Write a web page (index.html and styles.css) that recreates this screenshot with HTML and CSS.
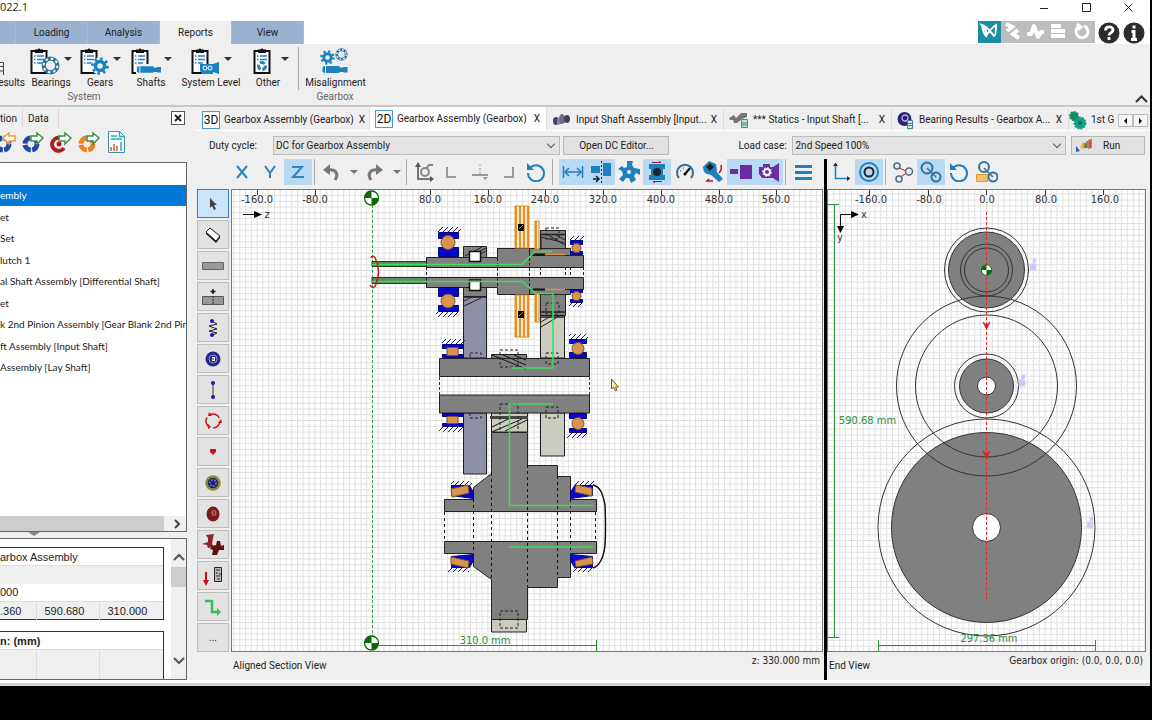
FILE: index.html
```html
<!DOCTYPE html>
<html lang="en">
<head>
    <meta charset="UTF-8">
    <meta name="viewport" content="width=device-width, initial-scale=1.0">
    <title>Gearbox Assembly</title>
    <link rel="stylesheet" href="styles.css">
</head>
<body>
    <!-- shared symbols -->
    <svg class="defs" width="0" height="0">
        <symbol id="clipboard" viewBox="0 0 18 28">
            <path d="M1.5 4h15v22h-15z" fill="#fff" stroke="#111" stroke-width="2"/>
            <path d="M5 2.500h2.500a1.600 1.600 0 0 1 3 0H13V6H5z" fill="#111"/>
            <path d="M4 9h1.500M4 12.500h1.500M4 16h1.500M7 9h7M7 12.500h7M7 16h5" stroke="#2980b9" stroke-width="1.500"/>
        </symbol>
        <symbol id="origin" viewBox="-8 -8 16 16">
            <circle r="7" fill="#fff" stroke="#0a6b0a" stroke-width="1.300"/>
            <path d="M0 0V-7A7 7 0 0 0-7 0zM0 0V7A7 7 0 0 0 7 0z" fill="#0a6b0a"/>
        </symbol>
        <symbol id="shaft" viewBox="0 0 26 9">
            <path d="M3 1h15v1.500h4V2h4v5.500h-4V7h-4v1H3L1 7V2z" fill="#1f80c0"/>
            <path d="M4 1v7" stroke="#efefef"/>
        </symbol>
        <symbol id="ring" viewBox="0 0 18 18">
            <circle cx="9" cy="9" r="6.500" fill="#efefef" stroke="#2a6f9e" stroke-width="4"/>
            <circle cx="9" cy="9" r="6.500" fill="none" stroke="#e8f2fa" stroke-width="2" stroke-dasharray="2.500 2.600"/>
        </symbol>
        <symbol id="gear" viewBox="0 0 18 18">
            <circle cx="9" cy="9" r="7.300" fill="none" stroke="#1f80c0" stroke-width="3" stroke-dasharray="2.500 3.230"/>
            <circle cx="9" cy="9" r="4.500" fill="none" stroke="#1f80c0" stroke-width="3.500"/>
        </symbol>
        <symbol id="lock" viewBox="0 0 9 14">
            <path d="M1 7h6v6H1zM4 7V3a1.500 1.500 0 0 1 3 0v2" fill="#c8c8fa" stroke="#d4d4fb"/>
        </symbol>
    </svg>

    <div class="app">
        <header class="titlebar">
            <span>022.1</span>
            <div class="window-controls">
                <button aria-label="Minimize"><svg width="9" height="9"><path d="M0 5.500h8" stroke="#222"/></svg></button>
                <button aria-label="Maximize"><svg width="9" height="9"><path d="M.5.5h8v8h-8z" fill="none" stroke="#222"/></svg></button>
                <button aria-label="Close"><svg width="9" height="9"><path d="M.5.5l8 8m0-8l-8 8" stroke="#222"/></svg></button>
            </div>
        </header>

        <nav class="ribbon-tabs">
            <button class="stub" aria-label="Previous tab"></button>
            <button>Loading</button>
            <button>Analysis</button>
            <button class="active">Reports</button>
            <button>View</button>
            <div class="modes">
                <svg width="117" height="22">
                    <path d="M0 0h117v22H0z" fill="#bdbdbd"/>
                    <path d="M0 0h23v22H0z" fill="#1b8da6"/>
                    <g fill="none" stroke="#fff" stroke-width="2">
                        <path d="M4 4c1 6 2 9 4 11 1-3 0-7-4-11 4 1 9 7 12 11 2 0 2-6 2-11-5 3-8 8-10 11"/>
                        <path d="M28 3l6 3-5 4M40 9l-5 4 6 4" stroke-width="4"/>
                        <path d="M49 13h4l3-8 4 11 3-5h3" stroke-width="4" stroke-linejoin="round"/>
                        <path d="M73 5h10M73 10h14M73 15h14" stroke-width="4"/>
                        <path d="M101 5.500a6 6 0 1 0 5-.5M99 3l4 3-3 3" stroke-width="3"/>
                    </g>
                </svg>
                <button aria-label="Help"><svg width="22" height="22"><circle cx="11" cy="11" r="10.500" fill="#2b2b2b"/><path d="M7.500 8.500c0-5 7.500-4.500 7.500-.5 0 3-4 2.500-4 5.500M11 15v3" fill="none" stroke="#fff" stroke-width="2.800"/></svg></button>
                <button aria-label="Information"><svg width="22" height="22"><circle cx="11" cy="11" r="10.500" fill="#2b2b2b"/><path d="M11 3.500v3M8.500 9.500H11V17M8 17.500h6" fill="none" stroke="#fff" stroke-width="3"/></svg></button>
            </div>
        </nav>

        <section class="ribbon">
            <div class="group system">
                <div class="group-items">
                    <button class="results">
                        <span class="icon"><svg width="24" height="28"><path d="M8.500 15.500h14v13h-14zM8 19.500h15M8 24h15M13.500 16v12M18.500 16v12" fill="none" stroke="#444"/></svg></span>
                        esults
                    </button>
                    <button class="w50">
                        <span class="icon"><svg width="31" height="28"><use href="#clipboard" width="18" height="28"/><use href="#ring" x="11" y="9" width="19" height="19"/></svg><i></i></span>
                        Bearings
                    </button>
                    <button class="w48">
                        <span class="icon"><svg width="30" height="28"><use href="#clipboard" width="18" height="28"/><circle cx="20" cy="19" r="9" fill="#efefef"/><use href="#gear" x="11" y="10" width="18" height="18"/></svg><i></i></span>
                        Gears
                    </button>
                    <button class="w54">
                        <span class="icon"><svg width="30" height="28"><use href="#clipboard" width="18" height="28"/><path d="M5 17h25v11H5z" fill="#efefef"/><use href="#shaft" x="5" y="18" width="25" height="9"/></svg><i></i></span>
                        Shafts
                    </button>
                    <button class="w66">
                        <span class="icon"><svg width="30" height="28"><use href="#clipboard" width="18" height="28"/><path d="M9 17h13l6-2v12l-6-2v2H11l-2-3z" fill="#1f80c0"/><circle cx="14" cy="21" r="2" fill="none" stroke="#fff"/><circle cx="19" cy="21" r="2" fill="none" stroke="#fff"/></svg><i></i></span>
                        System Level
                    </button>
                    <button class="w48">
                        <span class="icon wide"><svg width="22" height="28"><use href="#clipboard" width="18" height="28"/><path d="M3 14h12v10H3z" fill="#fff"/><circle cx="9" cy="19" r="3.500" fill="#fff" stroke="#1f80c0" stroke-width="3" stroke-dasharray="5 2"/></svg><i></i></span>
                        Other
                    </button>
                </div>
                <div class="group-name">System</div>
            </div>
            <div class="group gearbox">
                <div class="group-items">
                    <button>
                        <span class="icon"><svg width="30" height="28"><use href="#gear" y="3" width="15" height="15"/><use href="#ring" x="15" y="1" width="13" height="13"/><use href="#shaft" y="18" width="29" height="9"/></svg></span>
                        Misalignment
                    </button>
                </div>
                <div class="group-name">Gearbox</div>
            </div>
            <button class="collapse" aria-label="Collapse ribbon"><svg width="13" height="8"><path d="M1 7l5.500-5.500L12 7" fill="none" stroke="#333" stroke-width="2"/></svg></button>
        </section>

        <div class="workspace">
            <aside class="side">
                <div class="side-tabs">
                    <button>tion</button>
                    <button class="data">Data</button>
                    <button class="close" aria-label="Close panel"><svg width="8" height="8"><path d="M1 1l6 6m0-6L1 7" stroke="#222" stroke-width="2"/></svg></button>
                </div>
                <div class="side-tools">
                    <button aria-label="Import design"><svg width="22" height="22"><circle cx="9" cy="13" r="6" fill="none" stroke="#2146a8" stroke-width="5" stroke-dasharray="8 1.400"/><path d="M9 7l6-5v3h6v5h-6v3z" fill="#fff" stroke="#f09a2c" stroke-width="1.500"/></svg></button>
                    <button aria-label="Export design"><svg width="22" height="22"><circle cx="9" cy="13" r="6" fill="none" stroke="#2146a8" stroke-width="5" stroke-dasharray="8 1.400"/><path d="M21 7l-6-5v3H9v5h6v3z" fill="#fff" stroke="#3a9145" stroke-width="1.500"/></svg></button>
                    <button aria-label="Export component"><svg width="22" height="22"><path d="M14 17a6.500 6.500 0 1 1-4-10" fill="none" stroke="#b11c22" stroke-width="4"/><circle cx="9" cy="13" r="2.500" fill="#b11c22"/><path d="M21 7l-6-5v3H9v5h6v3z" fill="#fff" stroke="#3a9145" stroke-width="1.500"/></svg></button>
                    <button aria-label="Export assembly"><svg width="22" height="22"><circle cx="9" cy="13" r="6" fill="none" stroke="#f07f1c" stroke-width="5" stroke-dasharray="8 1.400"/><path d="M21 7l-6-5v3H9v5h6v3z" fill="#fff" stroke="#3a9145" stroke-width="1.500"/></svg></button>
                    <button aria-label="Report"><svg width="22" height="22"><path d="M2.500.5h11l5 5v16h-16z" fill="#fff" stroke="#3a8fa6"/><path d="M13.500.5v5h5M5 5h6M5 8h11M15 11v9" stroke="#2ba5b5" fill="none" stroke-width="1.500"/><path d="M5 20v-4M8 20v-7M11 20v-5" stroke="#d8582c" stroke-width="1.500"/></svg></button>
                </div>
                <div class="tree">
                    <ul>
                        <li></li>
                        <li class="selected">embly</li>
                        <li>et</li>
                        <li>Set</li>
                        <li>lutch 1</li>
                        <li>al Shaft Assembly [Differential Shaft]</li>
                        <li>et</li>
                        <li>k 2nd Pinion Assembly [Gear Blank 2nd Pinion</li>
                        <li>ft Assembly [Input Shaft]</li>
                        <li>Assembly [Lay Shaft]</li>
                    </ul>
                    <div class="hscroll"><div class="thumb"></div><svg width="22" height="15"><path d="M11 4l4 4-4 4" fill="none" stroke="#444" stroke-width="2"/></svg></div>
                </div>
                <div class="splitter"></div>
                <div class="props">
                    <div class="prop-tables">
                        <table>
                            <tr><td colspan="3">arbox Assembly</td></tr>
                            <tr class="alt"><td colspan="3"></td></tr>
                            <tr><td colspan="3">000</td></tr>
                            <tr class="alt"><td class="c1">.360</td><td class="c2">590.680</td><td class="c3">310.000</td></tr>
                        </table>
                        <table class="origin-table">
                            <tr><th colspan="3">n: (mm)</th></tr>
                            <tr class="alt tall"><td class="c1"></td><td class="c2"></td><td></td></tr>
                        </table>
                    </div>
                    <div class="vscroll">
                        <svg width="15" height="20"><path d="M3 13l5-5 5 5" fill="none" stroke="#555" stroke-width="2"/></svg>
                        <div class="thumb"></div>
                        <svg width="15" height="20"><path d="M3 7l5 5 5-5" fill="none" stroke="#555" stroke-width="2"/></svg>
                    </div>
                </div>
            </aside>

            <main class="document">
                <nav class="doc-tabs">
                    <div class="tab first"><b class="dim">3D</b><span>Gearbox Assembly (Gearbox)</span><button aria-label="Close tab">X</button></div>
                    <div class="tab active"><b class="dim">2D</b><span>Gearbox Assembly (Gearbox)</span><button aria-label="Close tab">X</button></div>
                    <div class="tab">
                        <svg width="20" height="16"><ellipse cx="4" cy="9" rx="3" ry="4" fill="#4b3a80"/><path d="M5 7l8-3v7l-8 2z" fill="#8a8a94"/><ellipse cx="10" cy="7" rx="3" ry="5" fill="#6c6b88"/><ellipse cx="15" cy="7" rx="3" ry="4" fill="#46405f"/></svg>
                        <span>Input Shaft Assembly [Input...</span><button aria-label="Close tab">X</button>
                    </div>
                    <div class="tab statics">
                        <svg width="20" height="18"><path d="M0 7l5-3 2 3 5-5h6v4l-5 2-5 4H5l-1-3H1z" fill="#777"/><path d="M12.500 8.500h6v8h-6z" fill="#bde3d8" stroke="#2a9a84"/><path d="M13 12h5m-5 2h5" stroke="#2a9a84"/></svg>
                        <span>*** Statics - Input Shaft [...</span><button aria-label="Close tab">X</button>
                    </div>
                    <div class="tab">
                        <svg width="18" height="18"><circle cx="7.500" cy="8" r="7" fill="#2a2176"/><circle cx="8" cy="7" r="3" fill="none" stroke="#b9b4e4" stroke-width="1.300"/><path d="M10.500 9.500h5v8h-5z" fill="#cdeae6" stroke="#3b7f95"/><path d="M11 12.500h4m-4 2h4" stroke="#3b7f95"/></svg>
                        <span>Bearing Results - Gearbox A...</span><button aria-label="Close tab">X</button>
                    </div>
                    <div class="tab last">
                        <svg width="18" height="20"><circle cx="5" cy="6" r="4" fill="#168a62" stroke="#168a62" stroke-dasharray="2 1" stroke-width="2"/><circle cx="11" cy="13" r="5.500" fill="#14a184" stroke="#14a184" stroke-dasharray="2 1" stroke-width="2"/><circle cx="11" cy="13" r="2" fill="#0c6f58"/></svg>
                        <span>1st G</span>
                    </div>
                    <div class="tab-arrows">
                        <button aria-label="Scroll left"><svg width="5" height="6"><path d="M4 0v6L1 3z"/></svg></button>
                        <button aria-label="Scroll right"><svg width="5" height="6"><path d="M1 0v6l3-3z"/></svg></button>
                    </div>
                </nav>

                <div class="case-bar">
                    <label for="duty">Duty cycle:</label>
                    <div class="select duty"><select id="duty"><option>DC for Gearbox Assembly</option></select></div>
                    <button class="editor">Open DC Editor...</button>
                    <label class="load-label" for="load">Load case:</label>
                    <div class="select load"><select id="load"><option>2nd Speed 100%</option></select></div>
                    <button class="run"><svg width="18" height="13"><path d="M1 7l4 5-4 1z" fill="#3d57a5"/><path d="M6 9l2-4 1 5" stroke="#e0b23c" stroke-width="2" fill="none"/><path d="M10 9V4l2 5V2" stroke="#6b7a3b" fill="none" stroke-width="1.500"/><path d="M14 10V1l2 8V0" stroke="#b95a3f" fill="none" stroke-width="1.500"/></svg>Run</button>
                </div>

                <div class="views">
                    <section class="view section-view">
                        <div class="toolbar">
                            <button class="axis" aria-label="View X"><svg width="16" height="16"><path d="M3 2l10 12M13 2L3 14"/></svg></button>
                            <button class="axis" aria-label="View Y"><svg width="16" height="16"><path d="M3 2l5 7 5-7M8 8v6"/></svg></button>
                            <button class="axis on" aria-label="View Z"><svg width="16" height="16"><path d="M2 3h10L3 13h11"/></svg></button>
                            <hr>
                            <button aria-label="Undo"><svg width="20" height="18"><path d="M6 7c8-1 11 4 7 10" fill="none" stroke="#777" stroke-width="3"/><path d="M1 7l7-6v11z" fill="#777"/></svg></button>
                            <button class="drop" aria-label="Undo list"><i></i></button>
                            <button aria-label="Redo"><svg width="20" height="18"><path d="M13 7C5 6 2 11 6 17" fill="none" stroke="#777" stroke-width="3"/><path d="M18 7l-7-6v11z" fill="#777"/></svg></button>
                            <button class="drop" aria-label="Redo list"><i></i></button>
                            <hr>
                            <button aria-label="Align axes"><svg width="20" height="20"><path d="M4 18V3m0 14h14" stroke="#777" stroke-width="2"/><path d="M1 5l3-5 3 5zM16 14l4 3-4 3z" fill="#555"/><circle cx="11" cy="10" r="4" fill="none" stroke="#888" stroke-width="2"/><path d="M12 7l3-4h4" fill="none" stroke="#888" stroke-width="2"/></svg></button>
                            <button aria-label="Align left"><svg width="16" height="16"><path d="M3 3v10h9" fill="none" stroke="#999" stroke-width="2"/></svg></button>
                            <button aria-label="Align centre"><svg width="18" height="18"><path d="M1 12h16" stroke="#999" stroke-width="2"/><path d="M9 1v10" stroke="#999" stroke-dasharray="2 2"/><path d="M12 14h5l-3 3z" fill="#999"/></svg></button>
                            <button aria-label="Align right"><svg width="16" height="16"><path d="M13 3v10H4" fill="none" stroke="#999" stroke-width="2"/></svg></button>
                            <button aria-label="Refresh"><svg width="20" height="20"><path d="M4 6a8 8 0 1 1-2 5" fill="none" stroke="#1f80c0" stroke-width="2"/><path d="M1 1v7h7z" fill="#1f80c0"/></svg></button>
                            <hr>
                            <button class="on wide-gap" aria-label="Dimensions"><svg width="22" height="14"><path d="M1.500 1v12M20.500 1v12M3 7h16M7 3L3 7l4 4m8-8l4 4-4 4" fill="none" stroke="#1f80c0" stroke-width="1.500"/></svg></button>
                            <button class="on" aria-label="Section offset"><svg width="22" height="22"><path d="M1 5h9v7H1zM13 2h8v13h-8z" fill="#1f80c0"/><path d="M11.500 0v22" stroke="#222" stroke-dasharray="2 2"/><path d="M3 18h5M6 15l3 3-3 3" stroke="#222" fill="none" stroke-width="1.500"/></svg></button>
                            <button aria-label="Housing"><svg width="22" height="22"><path d="M0 8l4-3 2 2 3-1V0h6l-1 4 2 3 6 1v6l-4-2-2 3 2 4-5 3-2-5H8l-3 4-4-3 4-4-1-4z" fill="#1f80c0"/><circle cx="11" cy="11" r="2" fill="#efefef"/></svg></button>
                            <button class="on" aria-label="Bearing load"><svg width="20" height="22"><path d="M2 3h16v5H2zM2 14h16v5H2zM4 8h12v6H4z" fill="#1f80c0"/><circle cx="10" cy="11" r="4" fill="#222"/><path d="M5 1.500h9l-2-1.500M15 20.500H6l2 1.500" stroke="#b11c22" fill="none"/></svg></button>
                            <button aria-label="Speed"><svg width="20" height="18"><path d="M4 15a8 8 0 1 1 12 0" fill="none" stroke="#2d6f9c" stroke-width="2"/><path d="M10 11l5-6" stroke="#111" stroke-width="2"/><circle cx="10" cy="11" r="1.500"/><path d="M5 8h1M8 5h1" stroke="#333"/></svg></button>
                            <button aria-label="Repair"><svg width="22" height="22"><path d="M9 6l-1 7 9 8 4-3-7-8z" fill="#1f80c0"/><path d="M2 11l-1-5 6-6 7 3 1 7-5 4-5-1z" fill="#1f80c0"/><path d="M4 6l4-4 4 4-4 4z" fill="#222"/><path d="M19 4c1 4 0 6-2 8M11 20H5l2-2" stroke="#b11c22" stroke-width="1.500" fill="none"/></svg></button>
                            <button class="on" aria-label="Shaft view"><svg width="22" height="16"><path d="M0 5h8v5H0zM10 1h12v14H10z" fill="#6a2ca0"/></svg></button>
                            <button class="on" aria-label="Housing view"><svg width="22" height="22"><path d="M1 6h4V3h7v3h3l6-4v19l-6-4H4l-3-4z" fill="#6a2ca0"/><circle cx="9" cy="11" r="3" fill="none" stroke="#fff" stroke-width="2"/><circle cx="9" cy="11" r="4.500" fill="none" stroke="#fff" stroke-dasharray="1.500 2"/></svg></button>
                            <hr>
                            <button class="menu" aria-label="Menu"><svg width="17" height="17"><path d="M0 2.500h17M0 8.500h17M0 14.500h17" stroke="#1f80c0" stroke-width="3"/></svg></button>
                        </div>
                        <div class="stage">
                            <div class="tools">
                                <button class="on" aria-label="Select"><svg width="14" height="14"><path d="M4 1v10l2-2 2 4 2-1-2-4h3z" fill="#444"/></svg></button>
                                <button aria-label="Erase"><svg width="16" height="16"><path d="M1 5l4-4 10 8-4 5z" fill="#fff" stroke="#222"/><path d="M1 5v2l10 9 4-5V9l-4 5z" fill="#222"/></svg></button>
                                <button aria-label="Shaft section"><svg width="22" height="8"><path d="M.5.5h21v7H.5z" fill="#999" stroke="#666"/></svg></button>
                                <button aria-label="Split section"><svg width="22" height="18"><path d="M.5 8.500h21v8H.5z" fill="#999" stroke="#555"/><path d="M11 8v9" stroke="#222" stroke-dasharray="2 1"/><path d="M11 1v5M8.500 3.500h5" stroke="#111" stroke-width="1.500"/></svg></button>
                                <button aria-label="Spring"><svg width="12" height="20"><path d="M5 3l5 3-8 2 8 3-8 2 8 2-4 2" fill="none" stroke="#222"/><circle cx="5" cy="3" r="2" fill="#1717b5"/><circle cx="5" cy="17" r="2" fill="#1717b5"/></svg></button>
                                <button aria-label="Bearing"><svg width="16" height="16"><circle cx="8" cy="8" r="7.500" fill="#262a86"/><circle cx="8" cy="8" r="4" fill="none" stroke="#9295d8"/><path d="M7 6h3v4H7z" fill="#fff"/><path d="M8 7v2" stroke="#262a86"/></svg></button>
                                <button aria-label="Link"><svg width="8" height="20"><path d="M4 2v16" stroke="#333"/><circle cx="4" cy="3" r="2" fill="#1717b5"/><circle cx="4" cy="17" r="2" fill="#1717b5"/></svg></button>
                                <button aria-label="Rotate"><svg width="18" height="18"><circle cx="9" cy="9" r="7" fill="none" stroke="#cc1414" stroke-width="1.500" stroke-dasharray="11 3.700"/><path d="M5 0l-1 4 4 0zM17 7l-3 4 4 0zM4 17l0-5 3 3z" fill="#cc1414"/></svg></button>
                                <button aria-label="Load point"><svg width="8" height="6"><path d="M1 0h6v3L4 6 1 3z" fill="#cc1414"/></svg></button>
                                <button aria-label="Planetary"><svg width="16" height="16"><circle cx="8" cy="8" r="6.500" fill="#20235c" stroke="#8f8c35" stroke-width="2.500"/><circle cx="8" cy="8" r="3" fill="none" stroke="#6a70e8" stroke-width="2" stroke-dasharray="1.500 1.500"/></svg></button>
                                <button aria-label="Clutch"><svg width="14" height="16"><ellipse cx="7" cy="8" rx="6.500" ry="7.500" fill="#7a1a1d"/><ellipse cx="8" cy="7" rx="2.500" ry="3" fill="#b56a6d"/><path d="M8 5v4" stroke="#3c0809"/></svg></button>
                                <button aria-label="Carrier"><svg width="24" height="24"><path d="M1 11l6-2 0-4-2-3 8-1-1 4-1 6 2 3-6 1-1-3z" fill="#8d2326"/><path d="M11 13l4-1 1-4 3 0 1 5 3-1v5l-5 0-2 5-5 0 1-5-3-1z" fill="#5f1114"/></svg></button>
                                <button aria-label="Load case"><svg width="22" height="20"><path d="M4 6v9" stroke="#d01010" stroke-width="2"/><path d="M1 14h6l-3 6z" fill="#d01010"/><path d="M12.500 1.500h7v14h-7z" fill="#bbb" stroke="#222"/><path d="M14 4h4M14 7h2m1 1h2M14 10h4M15 13h3" stroke="#333"/></svg></button>
                                <button aria-label="Power flow"><svg width="18" height="18"><path d="M1 3h7v11h6" fill="none" stroke="#2fc254" stroke-width="2.500"/><path d="M13 10l4 4-4 4z" fill="#2fc254"/></svg></button>
                                <button aria-label="More">...</button>
                            </div>
                            <div class="canvas">
                                <svg class="drawing">
                                    <defs>
                                        <pattern id="gridA" width="5.770" height="5.770" x="372" y="270" patternUnits="userSpaceOnUse"><path d="M0 .5h5.770M.5 0v5.770" stroke="#e0e0e0" stroke-width="1" fill="none"/></pattern>
                                        <pattern id="stripe" width="4" height="10" x="515" patternUnits="userSpaceOnUse"><path d="M0 0h4v10H0z" fill="#fde6c4"/><path d="M1 0v10" stroke="#e08414" stroke-width="1.700"/></pattern>
                                        <pattern id="hatch" width="5" height="5" patternUnits="userSpaceOnUse"><path d="M-1 6L6-1M-1 1l2-2M4 6l2-2" stroke="#1c1c6a" stroke-width="1"/></pattern>
                                    </defs>
                                    <g transform="translate(-232 -190)">
                                        <rect x="232" y="190" width="3000" height="2000" fill="url(#gridA)"/>
                                        <path d="M257.500 190v5M315.500 190v5M430.500 190v5M488.500 190v5M545.500 190v5M603.500 190v5M661.500 190v5M719.500 190v5M776.500 190v5" stroke="#333"/>
                                        <g class="ruler">
                                            <text x="257" y="203">-160.0</text><text x="315" y="203">-80.0</text><text x="430" y="203">80.0</text><text x="488" y="203">160.0</text><text x="545" y="203">240.0</text><text x="603" y="203">320.0</text><text x="661" y="203">400.0</text><text x="719" y="203">480.0</text><text x="776" y="203">560.0</text>
                                            <text x="267" y="218">z</text>
                                        </g>
                                        <path d="M243 214.500h13" stroke="#111"/><path d="M254 211l8 3.500-8 3.500z"/>
                                        <path d="M372.500 205v432" stroke="#3c9c4c" stroke-dasharray="3 2"/>

                                        <!-- gears behind the shafts -->
                                        <g stroke="#222">
                                            <path d="M463.500 287v71h23v-71zM463.500 413v61h23v-61z" fill="#8e90a3"/>
                                            <path d="M540.500 315v43h24v-43zM540.500 413v43h24v-43z" fill="#cbcbc0"/>
                                            <path d="M491.500 413h36v19h-36z" fill="#cbcbc0"/>
                                            <path d="M491.500 619h35v13h-35z" fill="#cbcbc0"/>
                                        </g>

                                        <!-- input shaft -->
                                        <path d="M372 261.500h55v5h-55zM372 277.500h55v6h-55z" fill="#5d8a60" stroke="#1f3f22"/>
                                        <path d="M463.500 246.500h23v11h-23zM463.500 287.500h23v9h-23z" fill="#828282" stroke="#222"/>
                                        <g fill="#808080" stroke="#222">
                                            <path d="M540.500 230.500h25v25h-25zM540.500 289.500h25v26h-25z"/>
                                            <path d="M529.500 248.500h41v8h-41zM529.500 288.500h41v6h-41z"/>
                                            <path d="M426.500 257.500h71v-9h32v7h54v12h-157z"/>
                                            <path d="M426.500 277.500h157v12h-54v5h-32v-7h-71z"/>
                                        </g>
                                        <path d="M540 234.500h25M540 312h25M541 317h23M463 297h24" stroke="#222" stroke-width="1.500"/>
                                        <path d="M465 256l17-9M471 256l15-8M477 256l9-5M464 306l17-8M464 301l8-4M541 250l0-13 24 6M548 235l17 10M556 235l9 5M541 327l20-12M541 322l10-6" stroke="#222" fill="none"/>
                                        <path d="M533 254.500h12M533 289.500h12" stroke="#111" stroke-width="2"/>
                                        <path d="M545 254.500h20M545 289.500h20" stroke="#d9954f" stroke-width="1.500"/>
                                        <path d="M426.500 267v10M497.500 248v46M529.500 248v46M540.500 267v10M565.500 267v10M570.500 267v10M583.500 267v10" stroke="#222" stroke-dasharray="3 2"/>
                                        <path d="M546 228h13v11h-13zM546 303h13v11h-13zM470 353h11v11h-11zM470 407h11v11h-11z" fill="none" stroke="#222" stroke-dasharray="3 2"/>
                                        <path d="M469.500 251.500h11v10h-11zM469.500 280h11v10.500h-11z" fill="#fff" stroke="#111" stroke-width="1.500"/>

                                        <!-- clutch plates -->
                                        <path d="M515 206h14v42h-14zM515 295h14v42h-14zM535 221h4v28h-4zM535 294h4v28h-4z" fill="url(#stripe)" stroke="#e08a1c"/>
                                        <path d="M518 224h6v7h-6zM518 311h6v7h-6z"/>
                                        <path d="M519 229l4-4M519 316l4-4" stroke="#e08a1c"/>

                                        <!-- lay shaft -->
                                        <g fill="#808080" stroke="#222">
                                            <path d="M439.500 358.500h150v18h-150zM439.500 395h150v18h-150z"/>
                                            <path d="M491.500 354.500h35v4h-35z"/>
                                        </g>
                                        <path d="M490 417.500h38" stroke="#444" stroke-width="3"/>
                                        <path d="M492 355l34 14M503 355l23 10M514 355l12 5M492 427l18-9M492 432l30-13M505 431l22-11" stroke="#111" fill="none"/>
                                        <path d="M439.500 377v18M589.500 377v18" stroke="#333" stroke-dasharray="3 2"/>
                                        <path d="M500 350h18v17h-18zM500 404h18v35h-18zM546 353h12v11h-12zM546 407h12v11h-12z" fill="none" stroke="#222" stroke-dasharray="3 2"/>

                                        <!-- differential -->
                                        <g fill="#808080" stroke="#222">
                                            <path d="M444.500 511.500v-12h29v-12l18-14v-41h36v33h30v11h13v23h26v12z"/>
                                            <path d="M444.500 541.500v12h29v13l18 13v40h36v-32h30v-10h13v-24h26v-12z"/>
                                        </g>
                                        <path d="M444.500 512v29M473.500 499v54M491.500 473v106M527.500 465v122M557.500 476v101M570.500 499v54M595.500 512v29" stroke="#111" stroke-dasharray="3 3"/>
                                        <path d="M500 611h18v17h-18z" fill="none" stroke="#222" stroke-dasharray="3 2"/>

                                        <!-- bearings -->
                                        <g fill="#0808cc" stroke="#06067a">
                                            <path d="M438.500 232.500h20v6h-20zM438.500 247.500h20v9h-20zM438.500 287.500h20v9h-20zM438.500 305.500h20v6h-20z"/>
                                            <path d="M570.500 240.500h12v4h-12zM570.500 251.500h12v3h-12zM570.500 289.500h12v3h-12zM570.500 299.500h12v3h-12z"/>
                                            <path d="M442.500 344.500h21v4h-21zM442.500 354.500h21v3h-21zM442.500 413.500h21v3h-21zM442.500 423.500h21v3h-21z"/>
                                            <path d="M569.500 339.500h17v4h-17zM569.500 352.500h17v5h-17zM569.500 413.500h17v5h-17zM569.500 428.500h17v4h-17z"/>
                                            <path d="M451.500 485.500h18l4 7v6l-22-3zM451.500 567.500h18l4-7v-6l-22 2z"/>
                                            <path d="M592.500 485.500h-18l-4 7v6l22-3zM592.500 567.500h-18l-4-7v-6l22 2z"/>
                                        </g>
                                        <g fill="#d9954f" stroke="#7d5128">
                                            <circle cx="448" cy="242.500" r="7"/><circle cx="448" cy="301" r="7"/>
                                            <circle cx="576.500" cy="248" r="4.500"/><circle cx="576.500" cy="296" r="4.500"/>
                                            <circle cx="578" cy="348.500" r="6"/><circle cx="578" cy="423.500" r="6"/>
                                            <path d="M447 347.500h11v8h-11zM447 416.500h11v7h-11z"/>
                                            <path d="M451 489l17-4 1 8-17 4zM451 557l18 4-1 7-17-4zM576 485l16 3v8l-17-4zM592 557l-17 4 1 6 17-3z"/>
                                        </g>
                                        <path d="M438 227h23v5h-23zM436 312h22v5h-22zM570 236h15v4h-15zM569 303h14v4h-14zM442 339h23v5h-23zM439 427h24v5h-24zM569 334h19v5h-19zM567 433h20v5h-20zM451 481h21v4h-21zM448 568h21v4h-21zM574 481h21v4h-21zM572 568h21v4h-21z" fill="url(#hatch)"/>

                                        <!-- power flow -->
                                        <path d="M372 264.500h150l13-13h17M372 281.500h150l14 12h17v74.500h-42M553 404h-43.500v101.500h84M509 547h84" fill="none" stroke="#3fdc55" stroke-width="1.500"/>
                                        <path d="M371 258c1-3 4-2 5 2q5 12 0 24c-1 4-4 5-6 1" fill="none" stroke="#d01414" stroke-width="1.500"/>
                                        <path d="M593 485c8 2 10 10 12 20q1 22 0 40c-1 10-4 20-12 23" fill="none" stroke="#111" stroke-width="1.500"/>

                                        <use href="#origin" x="363.500" y="190" width="16" height="16"/>
                                        <use href="#origin" x="363.500" y="635" width="16" height="16"/>
                                        <path d="M379 645.500h217M596.500 640v11" fill="none" stroke="#2f8f3a"/>
                                        <text class="dim-text" x="485" y="644">310.0 mm</text>
                                        <path d="M611.500 379v10l2-2 2 4 1.500-1-1.500-3h3z" fill="#f7e7a0" stroke="#6a5c2b"/>
                                    </g>
                                </svg>
                            </div>
                        </div>
                        <footer class="status"><span>Aligned Section View</span><output>z: 330.000 mm</output></footer>
                    </section>

                    <section class="view end-view">
                        <div class="toolbar">
                            <button aria-label="Axes"><svg width="20" height="20"><path d="M4.500 1v15.500H19" fill="none" stroke="#1f80c0" stroke-width="1.500"/><path d="M2 4l2.500-3L7 4zM16 14l3 2.500-3 2.500z" fill="#222"/></svg></button>
                            <button class="on" aria-label="Circles"><svg width="20" height="20"><circle cx="10" cy="10" r="9" fill="none" stroke="#1f80c0" stroke-width="2"/><circle cx="10" cy="10" r="4.500" fill="none" stroke="#222" stroke-width="2"/></svg></button>
                            <hr>
                            <button aria-label="Nodes"><svg width="22" height="22"><path d="M5 6l11 5-9 6" fill="none" stroke="#b11c22"/><g fill="#efefef" stroke="#4a6d87" stroke-width="1.500"><circle cx="5" cy="5" r="3"/><circle cx="17" cy="10.500" r="3.500"/><circle cx="7" cy="18" r="3"/></g></svg></button>
                            <button class="on" aria-label="Gear pair"><svg width="22" height="22"><g fill="none" stroke="#2f739f" stroke-width="2"><circle cx="7" cy="7" r="5.500"/><circle cx="16" cy="16" r="4.500"/></g><path d="M7 7l9 9" stroke="#2f739f" stroke-width="1.500"/></svg></button>
                            <button aria-label="Refresh end view"><svg width="20" height="20"><path d="M4 6a8 8 0 1 1-2 5" fill="none" stroke="#1f80c0" stroke-width="2"/><path d="M1 1v7h7z" fill="#1f80c0"/></svg></button>
                            <button aria-label="Gear pair box"><svg width="22" height="22"><g fill="none" stroke="#2f739f" stroke-width="2"><circle cx="8" cy="6" r="5"/><circle cx="17" cy="16" r="4.500"/></g><path d="M8 7l9 9" stroke="#2f739f" stroke-width="1.500"/><path d="M.5 13.500h11v7H.5z" fill="#f7bf6a" stroke="#e09a35"/></svg></button>
                        </div>
                        <div class="stage">
                            <div class="canvas">
                                <svg class="drawing">
                                    <defs>
                                        <pattern id="gridB" width="5.870" height="5.870" x="986" y="270" patternUnits="userSpaceOnUse"><path d="M0 .5h5.870M.5 0v5.870" stroke="#e0e0e0" stroke-width="1" fill="none"/></pattern>
                                    </defs>
                                    <g transform="translate(-828 -190)">
                                        <rect x="828" y="190" width="3000" height="2000" fill="url(#gridB)"/>
                                        <path d="M869.500 190v5M928.500 190v5M986.500 190v5M1045.500 190v5M1103.500 190v5" stroke="#333"/>
                                        <g class="ruler">
                                            <text x="871" y="203">-160.0</text><text x="929" y="203">-80.0</text><text x="987" y="203">0.0</text><text x="1046" y="203">80.0</text><text x="1105" y="203">160.0</text>
                                            <text x="864" y="218">x</text><text x="840" y="241">y</text>
                                        </g>
                                        <path d="M840.500 226v-11.500H854" fill="none" stroke="#111"/>
                                        <path d="M851 211l8 3.500-8 3.500zM837 226l3.500 7 3.500-7z"/>

                                        <g fill="none" stroke="#333">
                                            <circle cx="986.500" cy="527.500" r="108.500"/>
                                            <circle cx="986.500" cy="527.500" r="95" fill="#808080"/>
                                            <circle cx="986.500" cy="527.500" r="14" fill="#fff"/>
                                            <circle cx="986.500" cy="386" r="32"/>
                                            <circle cx="986.500" cy="386" r="27" fill="#808080"/>
                                            <circle cx="986.500" cy="386" r="9" fill="#fff"/>
                                            <circle cx="986.500" cy="270" r="42"/>
                                            <circle cx="986.500" cy="270" r="38" fill="#808080"/>
                                            <circle cx="986.500" cy="270" r="26"/>
                                            <circle cx="986.500" cy="270" r="22"/>
                                            <circle cx="986.500" cy="386" r="90"/>
                                            <circle cx="986.500" cy="386" r="71"/>
                                        </g>
                                        <path d="M986.500 212v387" stroke="#e02828" stroke-dasharray="3 2"/>
                                        <path d="M983 322l3.500 3 3.500-3-3.500 7zM983 451l3.500 3 3.500-3-3.500 7z" fill="#e02020" stroke="#e02020"/>
                                        <use href="#origin" x="980.500" y="264" width="12" height="12"/>
                                        <use href="#lock" x="1029" y="257" width="9" height="14"/>
                                        <use href="#lock" x="1018" y="373" width="9" height="14"/>
                                        <use href="#lock" x="1086" y="515" width="9" height="14"/>

                                        <path d="M834.500 205v432M828 204.500h11M828 637.500h11M878 645.500h218M878.500 640v11M1095.500 640v11" fill="none" stroke="#2f8f3a"/>
                                        <text class="dim-text left" x="839" y="424">590.68 mm</text>
                                        <text class="dim-text" x="989" y="642">297.36 mm</text>
                                    </g>
                                </svg>
                            </div>
                        </div>
                        <footer class="status"><span>End View</span><output>Gearbox origin: (0.0, 0.0, 0.0)</output></footer>
                    </section>
                </div>
            </main>
        </div>
    </div>
</body>
</html>
```
FILE: styles.css
```css
* {
    box-sizing: border-box;
}
body {
    margin: 0;
    height: 100vh;
    padding: 0 2px 34px 0;
    background-color: #000;
    color: #222;
    font-family: Roboto, "DejaVu Sans Condensed", sans-serif;
    font-size: 10px;
    overflow: hidden;
}
button, select {
    font: inherit;
    color: inherit;
    border: none;
    background: none;
    padding: 0;
    margin: 0;
}
svg {
    display: block;
    flex: none;
}
.defs {
    position: absolute;
}
.app {
    height: 100%;
    display: flex;
    flex-direction: column;
    background-color: #efefef;
    border-bottom: 3px solid #cdd6cd;
    overflow: hidden;
}

/* title bar and ribbon */
.titlebar {
    height: 21px;
    flex: none;
    background-color: #fff;
    display: flex;
    justify-content: space-between;
    font-family: "Open Sans", sans-serif;
    font-size: 11px;
    line-height: 14px;
}
.window-controls {
    display: flex;
    padding-right: 17px;
    gap: 33px;
    align-items: center;
    height: 14px;
}
.ribbon-tabs {
    height: 23px;
    flex: none;
    background-color: #fff;
    display: flex;
}
.ribbon-tabs > button {
    width: 72px;
    background-color: #9ab1d0;
    border-right: 1px solid #a6bbd6;
}
.ribbon-tabs > .stub {
    width: 16px;
}
.ribbon-tabs > .active {
    background-color: #efefef;
}
.modes {
    margin-left: auto;
    padding-right: 5px;
    display: flex;
    gap: 3px;
}
.ribbon {
    height: 63px;
    border-bottom: 2px solid #c6c6c6;
    display: flex;
    flex: none;
}
.group {
    text-align: center;
    padding-top: 3px;
}
.group-items {
    display: flex;
}
.group-items button {
    height: 43px;
    display: flex;
    flex-direction: column;
    align-items: center;
    white-space: nowrap;
}
.system .group-items .results {
    width: 26px;
    align-items: flex-end;
    padding-right: 1px;
}
.results .icon {
    padding-right: 20px;
}
.icon {
    height: 30px;
    display: flex;
    gap: 3px;
}
.icon.wide {
    gap: 6px;
    padding-left: 6px;
}
.icon i, .drop i {
    border: 4px solid transparent;
    border-top: 4px solid #333;
    border-bottom: none;
    height: 4px;
    margin-top: 10px;
}
.w48 {
    width: 48px;
}
.w50 {
    width: 50px;
}
.w54 {
    width: 54px;
}
.w66 {
    width: 66px;
}
.group-name {
    color: #666;
    line-height: 14px;
}
.system .group-name {
    padding-left: 34px;
    width: 134px;
}
.gearbox {
    width: 74px;
    margin-left: 6px;
}
.gearbox .group-items {
    border-left: 1px solid #aaa;
    justify-content: center;
}
.collapse {
    margin: auto 2px 2px auto;
}
.workspace {
    flex: 1;
    min-height: 0;
    display: flex;
    gap: 8px;
    border-bottom: 3px solid #fff;
}

/* left panel */
.side {
    width: 187px;
    flex: none;
    display: flex;
    flex-direction: column;
}
.side-tabs {
    display: flex;
    height: 22px;
    align-items: center;
}
.side-tabs button {
    height: 18px;
    padding-right: 5px;
    border-right: 1px solid #d5d5d5;
}
.side-tabs .data {
    padding: 0 9px 0 5px;
}
.side-tabs .close {
    margin-left: auto;
    margin-right: 2px;
    width: 14px;
    height: 14px;
    padding: 0;
    border: 1px solid #555;
    background-color: #fff;
    display: flex;
    align-items: center;
    justify-content: center;
}
.side-tools {
    display: flex;
    align-items: flex-start;
    height: 33px;
    gap: 6px;
    margin-left: -6px;
    padding-top: 2px;
}
.tree {
    flex: 1;
    min-height: 0;
    background-color: #fff;
    border: 1px solid #666;
    border-left: none;
    display: flex;
    flex-direction: column;
    overflow: hidden;
    font-family: Lato, Roboto, sans-serif;
}
.tree ul {
    list-style: none;
    margin: 0;
    padding: 0;
    flex: 1;
    display: grid;
    grid-auto-rows: calc(43px / 2);
    align-content: start;
}
.tree li {
    display: flex;
    align-items: center;
    white-space: nowrap;
}
.tree .selected {
    background-color: #0078d7;
    color: #fff;
}
.hscroll {
    height: 15px;
    display: flex;
    background-color: #f0f0f0;
}
.hscroll .thumb {
    flex: 1;
    background-color: #cdcdcd;
}
.splitter {
    height: 6px;
    display: flex;
    justify-content: center;
    padding-right: 119px;
}
.splitter::before {
    content: "";
    border: 6px solid transparent;
    border-top: 4px solid #888;
    border-bottom: none;
    height: 4px;
}
.props {
    height: 142px;
    border: 1px solid #666;
    border-left: none;
    background-color: #fff;
    display: flex;
    overflow: hidden;
    font-family: "Liberation Sans", sans-serif;
    font-size: 11px;
}
.prop-tables {
    flex: 1;
    padding: 8px 7px 0 0;
}
.props table {
    width: 100%;
    border-collapse: collapse;
    border: 1px solid #333;
    border-left: none;
    margin-bottom: 11px;
}
.props td, .props th {
    height: 18px;
    padding: 0;
    text-align: left;
}
.props .alt td {
    background-color: #efefef;
    border-top: 1px solid #ddd;
    border-right: 1px solid #ddd;
}
.props .alt td:last-child {
    border-right: 1px solid #333;
}
.props .c1 {
    width: 36px;
}
.props .c2 {
    width: 63px;
}
.props td.c2, .props td.c3 {
    padding-left: 8px;
}
.props .tall td {
    height: 40px;
}
.vscroll {
    width: 15px;
    background-color: #f0f0f0;
    display: flex;
    flex-direction: column;
    padding: 8px 0 8px;
}
.vscroll .thumb {
    height: 20px;
    background-color: #cdcdcd;
    margin-bottom: auto;
}

/* document tabs */
.document {
    flex: 1;
    min-width: 0;
    display: flex;
    flex-direction: column;
}
.doc-tabs {
    display: flex;
    height: 24px;
    padding-left: 2px;
    border-bottom: 1px solid #fff;
}
.tab {
    flex: 0 1 177px;
    min-width: 0;
    margin-top: 2px;
    display: flex;
    align-items: center;
    border-right: 1px solid #ddd;
    padding: 0 6px 0 5px;
    white-space: nowrap;
}
.tab.first {
    flex-basis: 173px;
    padding-right: 4px;
}
.tab.statics {
    flex-basis: 168px;
}
.tab span {
    flex: 1;
    min-width: 0;
    overflow: hidden;
    padding-left: 4px;
}
.tab.active {
    background-color: #fff;
    margin-top: 0;
}
.tab.last {
    flex: 1 1 0;
    border: none;
    padding: 0;
}
.dim {
    width: 18px;
    height: 18px;
    border: 1px solid #4a9bd0;
    background-color: #fff;
    color: #111;
    font-size: 12px;
    font-weight: normal;
    line-height: 16px;
    text-align: center;
}
.tab-arrows {
    display: flex;
    margin: 7px 2px 3px 0;
}
.tab-arrows button {
    width: 15px;
    border: 1px solid #bbb;
    background-color: #f5f5f5;
    display: flex;
    align-items: center;
    justify-content: center;
}

/* duty cycle row */
.case-bar {
    display: flex;
    align-items: center;
    height: 28px;
    padding: 0 5px 0 14px;
}
.case-bar label {
    width: 64px;
}
.case-bar .load-label {
    margin-left: 69px;
    width: 54px;
}
.select {
    position: relative;
    flex: 288;
}
.load {
    flex: 274;
}
.select select {
    appearance: none;
    width: 100%;
    height: 19px;
    display: block;
    border: 1px solid #bbb;
    background-color: #e3e3e3;
    padding-left: 2px;
}
.select::after {
    content: "";
    position: absolute;
    right: 6px;
    top: 5px;
    width: 5px;
    height: 5px;
    border: 1px solid #555;
    border-top: none;
    border-left: none;
    transform: rotate(45deg);
}
.case-bar button {
    height: 19px;
    border: 1px solid #b5b5b5;
    background-color: #e1e1e1;
}
.case-bar .editor {
    width: 106px;
    margin-left: 3px;
}
.case-bar .run {
    width: 74px;
    margin-left: 5px;
    display: flex;
    align-items: center;
    gap: 10px;
    padding-left: 3px;
}

/* views */
.views {
    flex: 1;
    min-height: 0;
    display: flex;
}
.view {
    display: flex;
    flex-direction: column;
    min-width: 0;
}
.section-view {
    flex: 1;
    padding: 0 1px 0 2px;
    border-right: 3px solid #000;
}
.end-view {
    flex: 0 0 323px;
    padding-right: 4px;
}
.toolbar {
    height: 30px;
    flex: none;
    display: flex;
    align-items: flex-start;
}
.section-view .toolbar {
    padding-left: 31px;
}
.toolbar button {
    width: 28px;
    height: 26px;
    display: flex;
    align-items: center;
    justify-content: center;
    flex: none;
}
.toolbar .on {
    background-color: #b9d9f3;
}
.toolbar .wide-gap {
    margin-left: 3px;
}
.toolbar .drop {
    width: 15px;
}
.drop i {
    border-top-color: #777;
    margin: 0;
}
.toolbar hr {
    width: 1px;
    height: 26px;
    border: none;
    background-color: #aaa;
    margin: 0 3px 0 2px;
    flex: none;
}
.axis path {
    fill: none;
    stroke: #2a86c0;
    stroke-width: 2;
}
.stage {
    flex: 1;
    min-height: 0;
    display: flex;
    gap: 2px;
}
.tools {
    width: 32px;
    display: flex;
    flex-direction: column;
    gap: 2px;
}
.tools button {
    flex: 1;
    min-height: 0;
    border: 1px solid #bdbdbd;
    background-color: #e2e2e2;
    display: flex;
    align-items: center;
    justify-content: center;
}
.tools .on {
    background-color: #cce4fa;
    border-color: #3f7fb5;
}
.canvas {
    flex: 1;
    min-width: 0;
    border: 1px solid #777;
    background-color: #fff;
    overflow: hidden;
}
.drawing {
    width: 100%;
    height: 100%;
}
.ruler text, .dim-text, .status output {
    font-family: "DejaVu Sans Condensed", sans-serif;
}
.ruler text {
    font-size: 11px;
    fill: #333;
    text-anchor: middle;
}
.dim-text {
    font-size: 11px;
    fill: #2f8f3a;
    text-anchor: middle;
}
.dim-text.left {
    text-anchor: start;
}
.status {
    height: 28px;
    flex: none;
    display: flex;
    justify-content: space-between;
    padding: 2px 3px 0 2px;
    line-height: 14px;
}
.section-view .status {
    padding-left: 36px;
}
.status span {
    padding-top: 5px;
}
```
